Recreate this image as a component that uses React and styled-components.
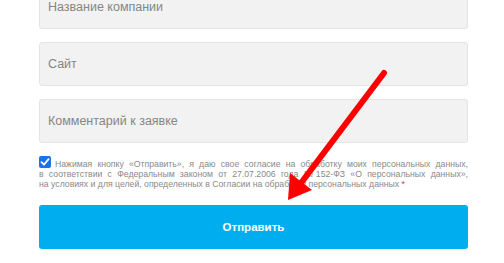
import React from "react";
import styled, { createGlobalStyle } from "styled-components";

const Global = createGlobalStyle`
  html, body { margin: 0; padding: 0; background: #fff; }
  body { font-family: "Liberation Sans", Arial, sans-serif; overflow: hidden; }
`;

const Page = styled.div`
  position: relative;
  width: 504px;
  height: 263px;
  overflow: hidden;
`;

const Form = styled.form`
  display: flex;
  flex-direction: column;
  width: 429px;
  margin: -15px 0 0 39px;
`;

const Field = styled.input`
  box-sizing: border-box;
  height: 44px;
  width: 100%;
  margin: 0 0 13px 0;
  padding: 0 8px;
  background: #f2f2f2;
  border: 1px solid #e4e4e4;
  border-radius: 3px;
  font-family: "Liberation Sans", Arial, sans-serif;
  font-size: 12.5px;
  color: #555;
  outline: none;
  &::placeholder { color: #858585; }
`;

const Consent = styled.label`
  display: block;
  margin-top: 3px;
  font-size: 8.7px;
  line-height: 10px;
  color: #8a8a8a;
`;

const Line = styled.span`
  display: block;
  white-space: nowrap;
  text-align: ${(p) => (p.$last ? "left" : "justify")};
  text-align-last: ${(p) => (p.$last ? "left" : "justify")};
`;

const Check = styled.span`
  display: inline-block;
  box-sizing: border-box;
  width: 12px;
  height: 12px;
  margin: -3px 4px 0 0;
  vertical-align: -1px;
  background: #1a73e8;
  border-radius: 2px;
  position: relative;
  svg { position: absolute; left: 1px; top: 1px; }
`;

const Star = styled.span`
  color: #e53935;
`;

const Submit = styled.button`
  box-sizing: border-box;
  margin-top: 16px;
  height: 44px;
  width: 100%;
  border: none;
  border-radius: 3px;
  background: #00aeef;
  color: #fff;
  font-family: "Liberation Sans", Arial, sans-serif;
  font-weight: bold;
  font-size: 11.5px;
`;

const Arrow = styled.svg`
  position: absolute;
  left: 0;
  top: 0;
  pointer-events: none;
`;

export default function App() {
  return (
    <Page>
      <Global />
      <Form onSubmit={(e) => e.preventDefault()}>
        <Field placeholder="Название компании" />
        <Field placeholder="Сайт" />
        <Field placeholder="Комментарий к заявке" />
        <Consent>
          <Line>
            <Check>
              <svg width="10" height="10" viewBox="0 0 10 10">
                <path d="M1.5 5.2 L4 7.6 L8.6 2.2" fill="none" stroke="#fff" strokeWidth="1.8" strokeLinecap="round" strokeLinejoin="round" />
              </svg>
            </Check>
            Нажимая кнопку «Отправить», я даю свое согласие на обработку моих персональных данных,
          </Line>
          <Line>в соответствии с Федеральным законом от 27.07.2006 года №152-ФЗ «О персональных данных»,</Line>
          <Line $last>на условиях и для целей, определенных в Согласии на обработку персональных данных <Star>*</Star></Line>
        </Consent>
        <Submit type="submit">Отправить</Submit>
      </Form>
      <Arrow width="504" height="263" viewBox="0 0 504 263">
        <line x1="384" y1="73" x2="298" y2="187" stroke="#ff0000" strokeWidth="6" strokeLinecap="round" />
        <polygon points="288,200 290,173 312,190" fill="#ff0000" />
      </Arrow>
    </Page>
  );
}
